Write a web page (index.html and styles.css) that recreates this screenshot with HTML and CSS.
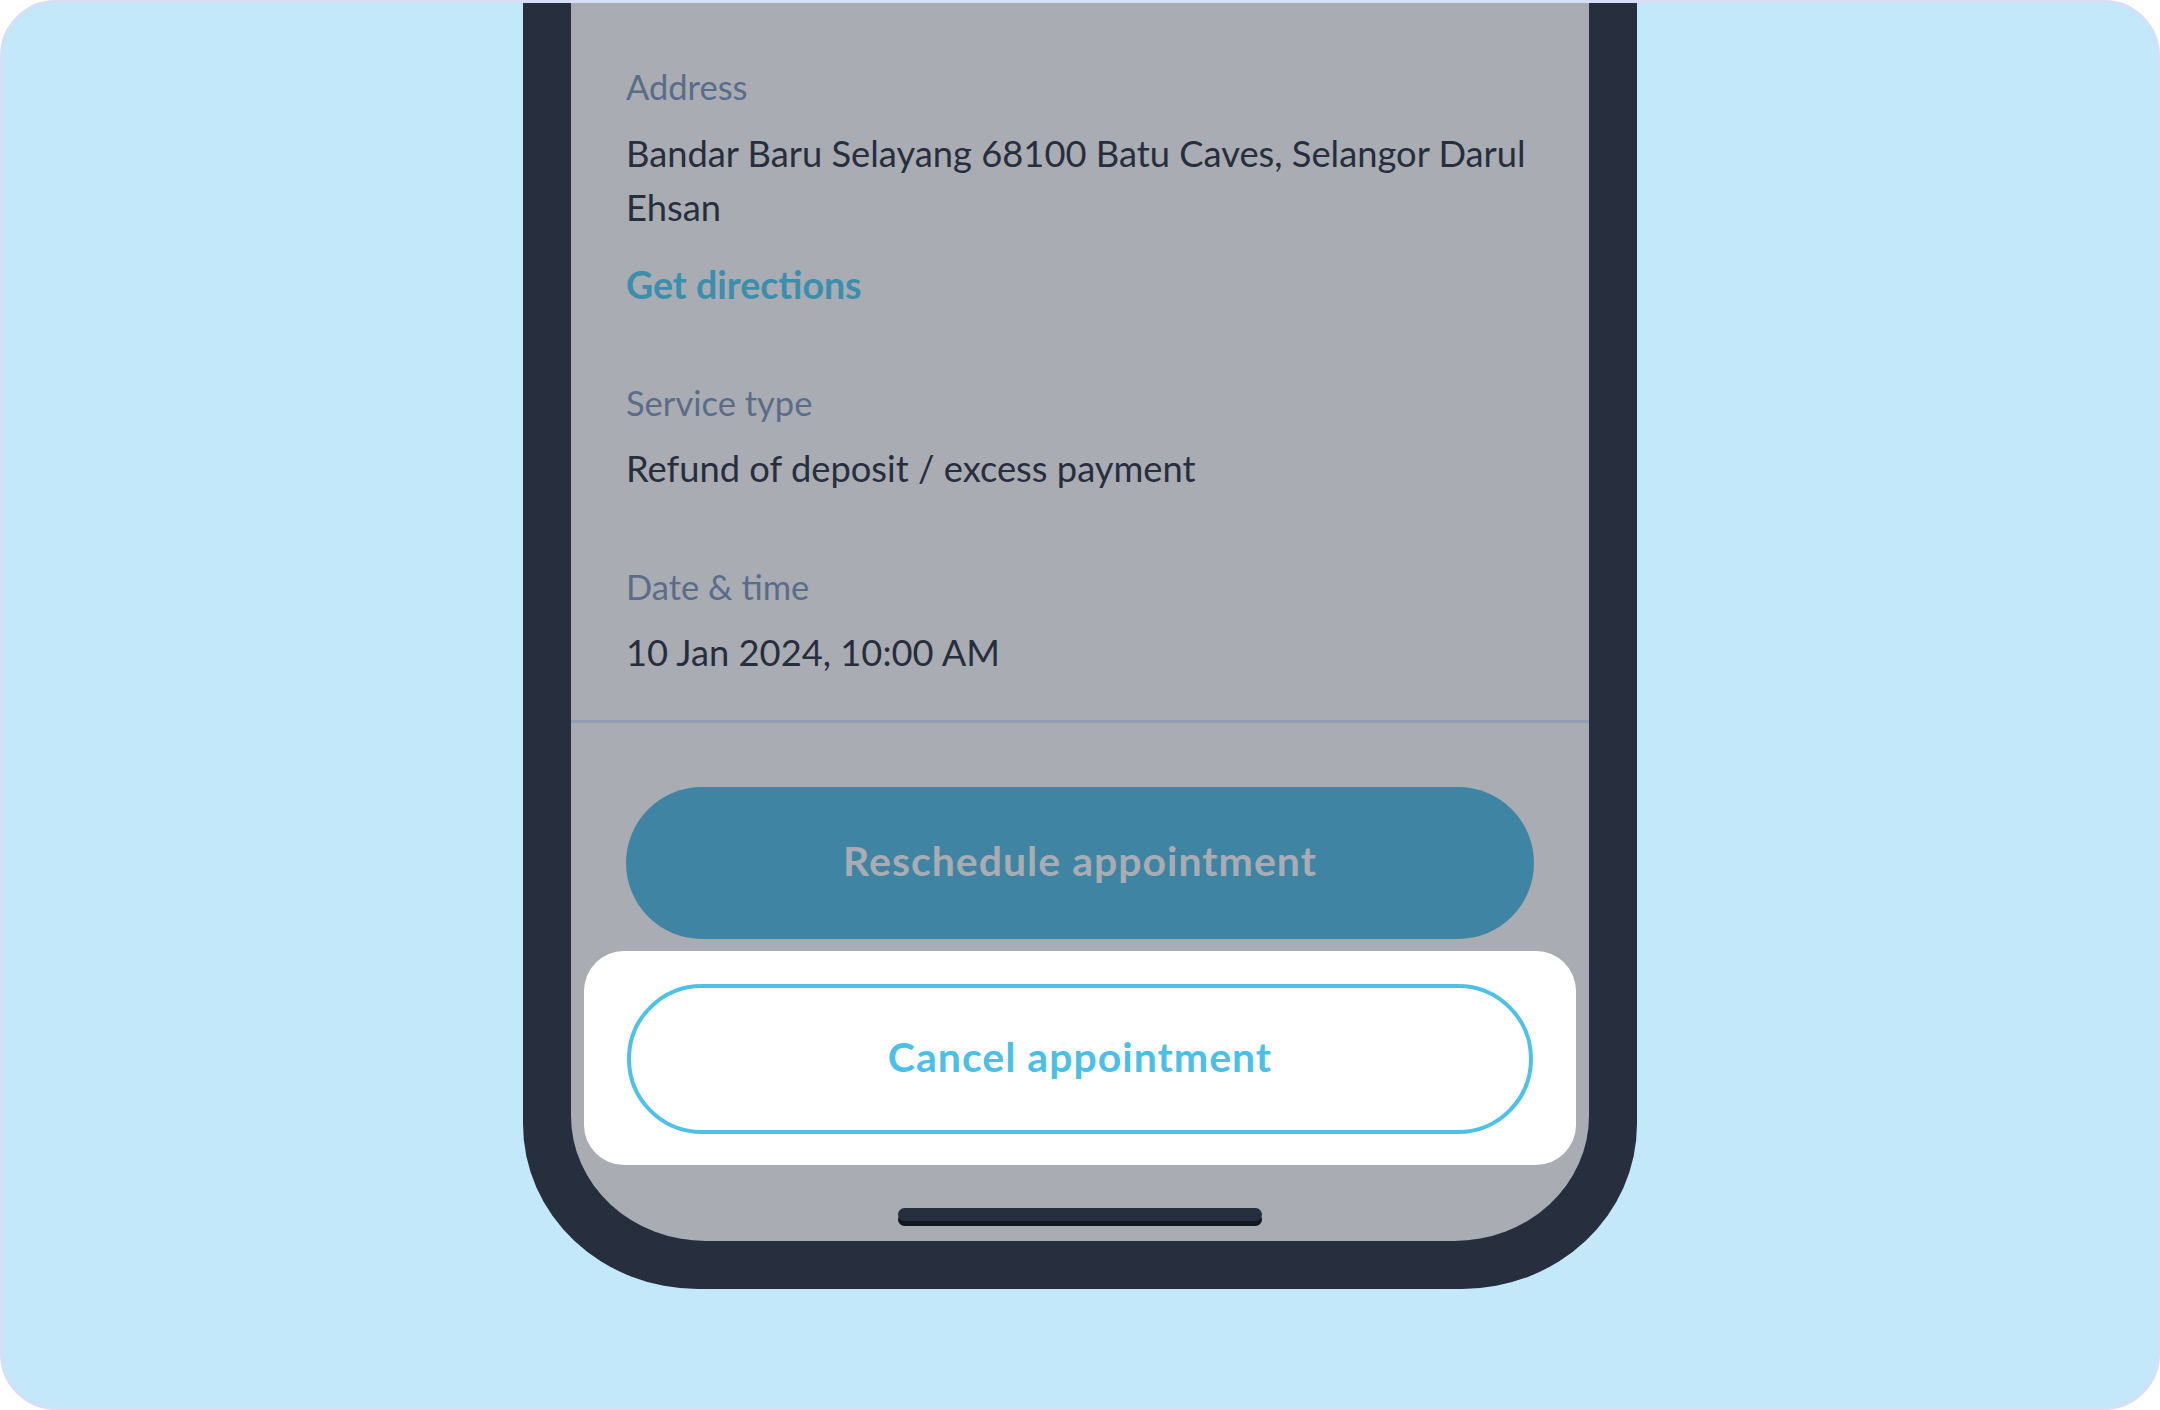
FILE: index.html
```html
<!DOCTYPE html>
<html>
<head>
  <title>Appointment details</title>
  <link rel="stylesheet" href="styles.css">
</head>
<body>
  <div class="card">
    <div class="phone">
      <div class="screen">
        <div class="details">
          <div class="field">
            <div class="label">Address</div>
            <div class="value">Bandar Baru Selayang 68100 Batu Caves, Selangor Darul Ehsan</div>
            <a class="link" href="#">Get directions</a>
          </div>
          <div class="field">
            <div class="label">Service type</div>
            <div class="value">Refund of deposit / excess payment</div>
          </div>
          <div class="field">
            <div class="label">Date &amp; time</div>
            <div class="value">10 Jan 2024, 10:00 AM</div>
          </div>
        </div>

        <hr class="divider">

        <button class="btn btn-primary">Reschedule appointment</button>

        <div class="highlight">
          <button class="btn btn-outline">Cancel appointment</button>
        </div>

        <div class="home-bar"></div>
      </div>
    </div>
  </div>
</body>
</html>
```

FILE: styles.css
```css
html, body {
  margin: 0;
  padding: 0;
  background-color: #ffffff;
}

body {
  font-family: Lato, "Open Sans", sans-serif;
  color: #272e3d;
}

.card {
  width: 2160px;
  height: 1410px;
  box-sizing: border-box;
  border: 3px solid #d6dff5;
  border-radius: 56px;
  background-color: #c2e8fa;
  overflow: hidden;
  display: flex;
  justify-content: center;
  align-items: flex-start;
}

.phone {
  width: 1114px;
  height: 1286px;
  box-sizing: border-box;
  padding: 0 48px 48px;
  background-color: #272e3d;
  border-radius: 0 0 175px 175px / 0 0 165px 165px;
  display: flex;
}

.screen {
  flex: 1;
  background-color: #a9acb3;
  border-radius: 0 0 135px 135px / 0 0 125px 125px;
  display: flex;
  flex-direction: column;
}

.details {
  padding: 64px 55px 0;
  display: flex;
  flex-direction: column;
  gap: 72px;
}

.field {
  display: flex;
  flex-direction: column;
  align-items: flex-start;
}

.label {
  font-size: 34.5px;
  line-height: 40px;
  color: #5b6c89;
}

.value {
  margin-top: 18px;
  font-size: 36.3px;
  line-height: 54px;
  color: #272e3d;
}

.field:first-child .value {
  margin-top: 19px;
}

.link {
  margin-top: 24px;
  font-size: 37.5px;
  line-height: 53px;
  font-weight: 700;
  color: #3b8fad;
  text-decoration: none;
}

.divider {
  margin: 41px 0 0;
  border: none;
  height: 3px;
  background-color: #939fb1;
}

.btn {
  display: block;
  box-sizing: border-box;
  padding: 0 0 5px;
  font-family: Lato, "Open Sans", sans-serif;
  font-size: 41px;
  font-weight: 700;
  letter-spacing: 1px;
  border-radius: 80px;
  cursor: pointer;
}

.btn-primary {
  margin: 64px 55px 0;
  height: 152px;
  border: none;
  background-color: #3f84a3;
  color: #a9acb3;
}

.highlight {
  margin: 12px 13px 0;
  padding: 33px 43px 31px;
  background-color: #ffffff;
  border-radius: 40px;
}

.btn-outline {
  width: 100%;
  height: 150px;
  border: 4px solid #4fc0e8;
  background-color: #ffffff;
  color: #4cbfe7;
}

.home-bar {
  align-self: center;
  margin-top: 43px;
  width: 364px;
  height: 13px;
  border-radius: 7px;
  background-color: #272e3d;
  box-shadow: 0 5px 0 #12161f;
}
```
